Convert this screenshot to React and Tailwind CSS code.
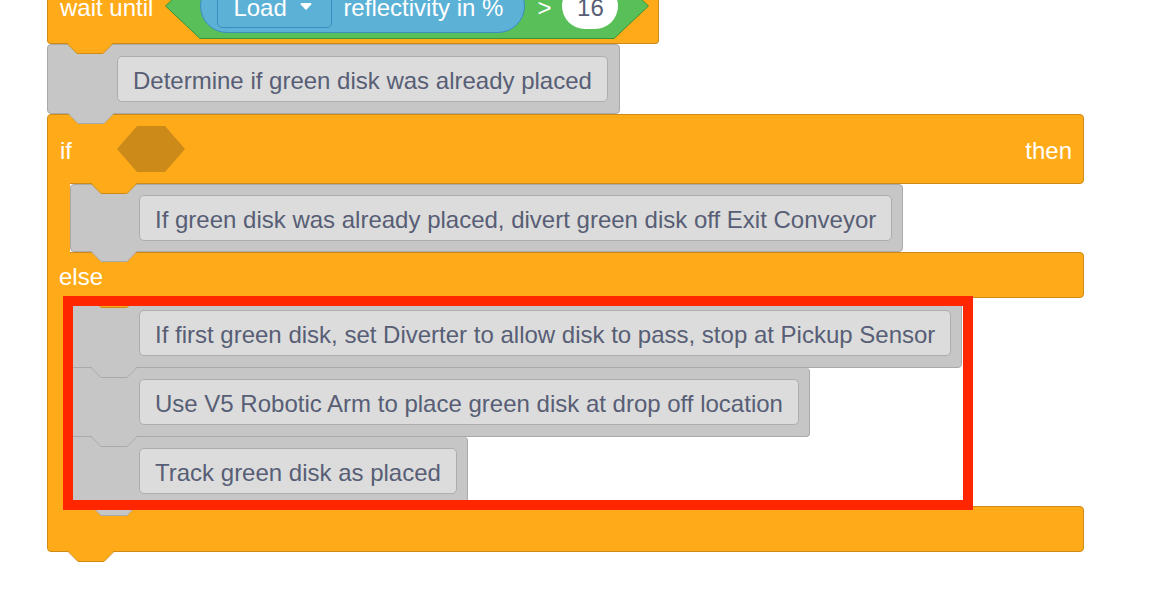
const ORANGE = '#ffab19'
const ORANGE_EDGE = '#cf8b17'
const GRAY = '#c6c6c6'
const GRAY_EDGE = '#a9a9a9'

// bottom tab that fits into the notch of the next block
function Tab({ fill, stroke, className = '' }) {
  return (
    <svg className={`absolute top-[calc(100%-1px)] z-10 ${className}`} width="48" height="13" viewBox="0 0 48 13">
      <polygon points="0,0 11,11.5 37,11.5 48,0" fill={fill} />
      <polyline points="0,0.5 11,11.5 37,11.5 48,0.5" fill="none" stroke={stroke} strokeWidth="1" />
    </svg>
  )
}

function Comment({ text, h = 'h-[69px]', top = true }) {
  return (
    <div className={`relative ${h} flex items-center pl-[68px] pr-[10px] bg-[#c6c6c6] border border-[#a9a9a9] ${top ? 'rounded-[4px]' : 'border-t-0 rounded-b-[4px] rounded-tr-[4px]'}`}>
      <div className="h-[46px] flex items-center px-[15px] pt-[4px] rounded-[5px] bg-[#dcdcdc] border border-[#adadad] text-[#575e75] whitespace-nowrap">
        {text}
      </div>
      <Tab fill={GRAY} stroke={GRAY_EDGE} className="left-[19px]" />
    </div>
  )
}

function Arm() {
  return <div className="relative z-[5] -my-px w-[23px] shrink-0 bg-[#ffab19] border-l border-[#cf8b17]" />
}

export default function App() {
  return (
    <div className="min-h-screen bg-white overflow-hidden font-['Liberation_Sans',Arial,sans-serif] text-[24px] leading-none">
      <div className="flex flex-col items-start pl-[47px]">

        {/* wait until block */}
        <div className="relative -mt-[32px] w-[612px] h-[76px] flex items-center pl-[12px] bg-[#ffab19] border border-t-0 border-[#cf8b17] rounded-b-[4px]">
          <span className="pt-[4px] text-white whitespace-nowrap">wait until</span>
          <div className="relative ml-[12px] w-[484px] h-[66px] flex items-center">
            <svg className="absolute inset-0" width="484" height="66" viewBox="0 0 484 66">
              <polygon points="0.5,33 35,0.5 449,0.5 483.5,33 449,65.5 35,65.5" fill="#59c059" stroke="#389438" strokeWidth="1" />
            </svg>
            <div className="relative ml-[35px] w-[325px] h-[54px] shrink-0 flex items-center pl-[16px] rounded-full bg-[#5cb1d6] border border-[#3d8cc0] text-white">
              <div className="w-[115px] h-[44px] flex items-center pl-[15px] rounded-[5px] border border-[#3d8cc0]">
                <span className="pt-[4px]">Load</span>
                <svg className="ml-[13px]" width="12" height="8" viewBox="0 0 12 8">
                  <path d="M1.5 1h9a1 1 0 0 1 .8 1.6l-4.5 4.6a1 1 0 0 1-1.6 0L.7 2.6A1 1 0 0 1 1.5 1z" fill="#fff" />
                </svg>
              </div>
              <span className="ml-[11px] pt-[4px] whitespace-nowrap">reflectivity in %</span>
            </div>
            <span className="relative ml-[12px] pt-[4px] text-white">&gt;</span>
            <div className="relative ml-[11px] w-[56px] h-[46px] pt-[4px] flex items-center justify-center rounded-full bg-white text-[#575e75]">16</div>
          </div>
          <Tab fill={ORANGE} stroke={ORANGE_EDGE} className="left-[18px]" />
        </div>

        {/* comment before the if */}
        <div className="relative h-[70px] flex items-center pl-[69px] pr-[11px] bg-[#c6c6c6] border border-[#a9a9a9] rounded-[4px]">
          <div className="h-[46px] flex items-center px-[15px] pt-[4px] rounded-[5px] bg-[#dcdcdc] border border-[#adadad] text-[#575e75] whitespace-nowrap">
            Determine if green disk was already placed
          </div>
          <Tab fill={GRAY} stroke={GRAY_EDGE} className="left-[19px]" />
        </div>

        {/* if / else block */}
        <div className="w-[1037px] flex flex-col">
          <div className="relative h-[70px] flex items-center justify-between pl-[12px] pr-[11px] bg-[#ffab19] border border-[#cf8b17] rounded-t-[4px] rounded-br-[4px] text-white">
            <div className="flex items-center">
              <span className="pt-[4px]">if</span>
              <svg className="ml-[45px]" width="68" height="46" viewBox="0 0 68 46">
                <polygon points="0,23 20,0 48,0 68,23 48,46 20,46" fill="#cc8a19" />
              </svg>
            </div>
            <span className="pt-[4px]">then</span>
            <Tab fill={ORANGE} stroke={ORANGE_EDGE} className="left-[42px]" />
          </div>

          <div className="flex">
            <Arm />
            <div className="flex flex-col items-start">
              <Comment h="h-[68px]" text="If green disk was already placed, divert green disk off Exit Conveyor" />
            </div>
          </div>

          <div className="relative h-[46px] flex items-center pl-[11px] bg-[#ffab19] border border-[#cf8b17] rounded-r-[4px] text-white">
            <span className="pt-[4px]">else</span>
            <Tab fill={ORANGE} stroke={ORANGE_EDGE} className="left-[42px]" />
          </div>

          <div className="relative flex">
            <Arm />
            <div className="flex flex-col items-start">
              <Comment h="h-[70px]" text="If first green disk, set Diverter to allow disk to pass, stop at Pickup Sensor" />
              <Comment h="h-[69px]" top={false} text="Use V5 Robotic Arm to place green disk at drop off location" />
              <Comment h="h-[69px]" top={false} text="Track green disk as placed" />
            </div>
            <div className="absolute left-[16px] -top-[2px] w-[910px] h-[214px] border-[10px] border-[#ff2600] z-20 pointer-events-none" />
          </div>

          <div className="relative h-[46px] bg-[#ffab19] border border-[#cf8b17] rounded-b-[4px] rounded-tr-[4px]">
            <Tab fill={ORANGE} stroke={ORANGE_EDGE} className="left-[19px]" />
          </div>
        </div>
      </div>
    </div>
  )
}
